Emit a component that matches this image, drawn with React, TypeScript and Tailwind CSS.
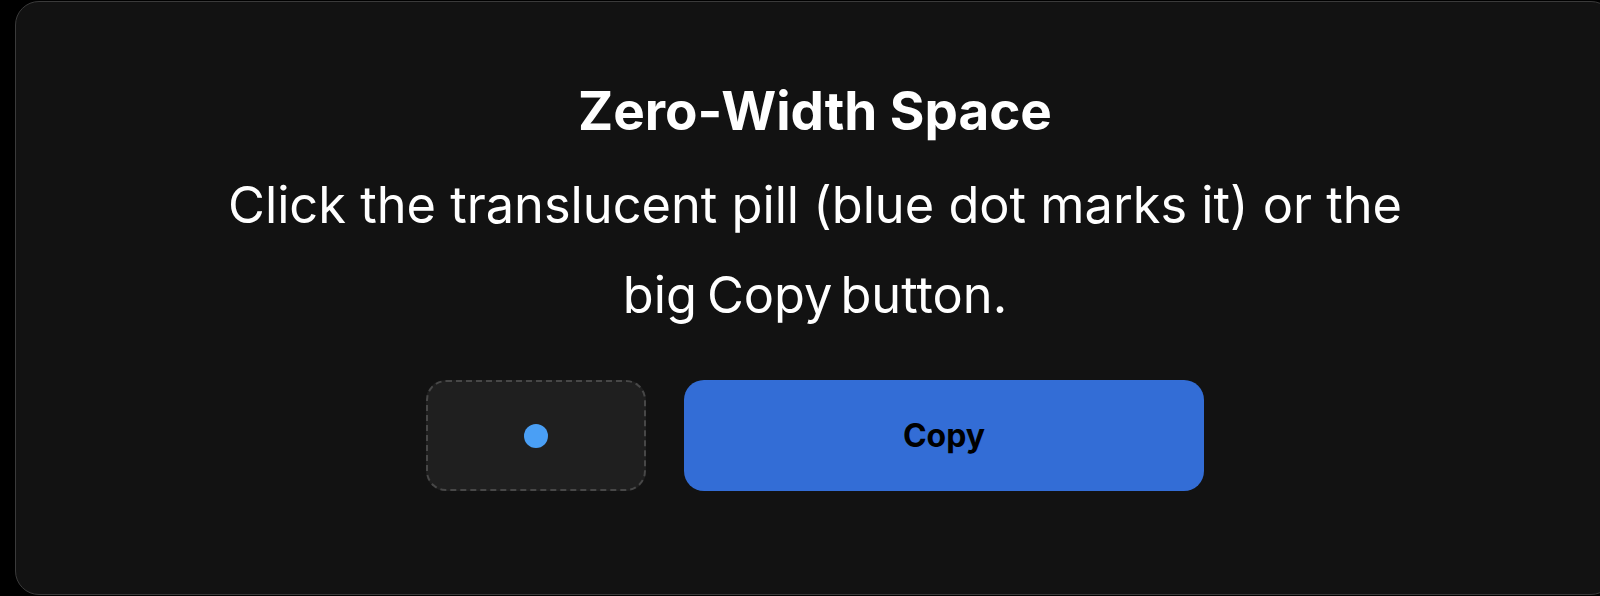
export default function App() {
  return (
    <div className="w-screen h-[596px] overflow-hidden bg-black pl-[15px] pt-px font-['Inter','Liberation_Sans',sans-serif]">
      <div className="w-[1600px] h-[594px] shrink-0 rounded-[24px] border border-[#3a3a3a] bg-[#121212] flex flex-col items-center pt-[77px]">
        <h1 className="text-[53px] leading-[64px] font-bold text-white">Zero-Width Space</h1>
        <p className="mt-[17px] w-[1200px] text-center text-[50.5px] leading-[90px] text-white">
          Click the translucent pill (blue dot marks it) or the big<span className="ml-[10px] mr-[8px]">Copy</span>button.
        </p>
        <div className="mt-[40px] flex gap-[38px]">
          <button className="w-[220px] h-[111px] rounded-[20px] border-2 border-dashed border-[#474747] bg-[#1f1f1f] flex items-center justify-center">
            <span className="w-6 h-6 rounded-full bg-[#4a9ff5]" />
          </button>
          <button className="w-[520px] h-[111px] rounded-[20px] bg-[#336dd6] text-black text-[32px] font-bold">Copy</button>
        </div>
      </div>
    </div>
  );
}
